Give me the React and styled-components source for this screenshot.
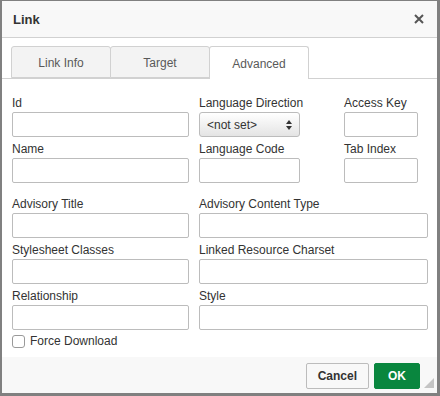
import styled, { createGlobalStyle } from "styled-components";

const GlobalStyle = createGlobalStyle`
  html, body {
    margin: 0;
    padding: 0;
    background: #ffffff;
  }
  body {
    font-family: "Liberation Sans", Arial, sans-serif;
    font-size: 12px;
    color: #333;
  }
`;

const Dialog = styled.div`
  width: 440px;
  height: 396px;
  box-sizing: border-box;
  border-style: solid;
  border-color: #808080;
  border-width: 1px 3px 3px 2px;
  display: flex;
  flex-direction: column;
  background: #fff;
  position: relative;
`;

const TitleBar = styled.div`
  height: 36px;
  flex: none;
  display: flex;
  align-items: center;
  justify-content: space-between;
  padding: 0 12px 0 11px;
  background: #f8f8f8;
  border-bottom: 1px solid #d1d1d1;
`;

const Title = styled.div`
  font-weight: bold;
  font-size: 13px;
  color: #333;
`;

const Close = styled.button`
  width: 12px;
  height: 12px;
  padding: 0;
  border: none;
  background: none;
  display: flex;
  align-items: center;
  justify-content: center;
  cursor: pointer;
`;

const TabBar = styled.div`
  display: flex;
  padding: 8px 0 0 9px;
  border-bottom: 1px solid #d1d1d1;
  flex: none;
`;

const Tab = styled.div`
  width: 100px;
  height: ${(p) => (p.$active ? "33px" : "32px")};
  margin-right: -1px;
  margin-bottom: ${(p) => (p.$active ? "-1px" : "0")};
  box-sizing: border-box;
  border: 1px solid #d1d1d1;
  border-bottom: ${(p) => (p.$active ? "none" : "1px solid #d1d1d1")};
  border-radius: 3px 3px 0 0;
  background: ${(p) => (p.$active ? "#fff" : "#f3f3f3")};
  color: #595959;
  font-size: 12px;
  display: flex;
  align-items: center;
  justify-content: center;
  padding-top: 1px;
`;

const Body = styled.div`
  flex: 1;
  padding: 16px 9px 0 10px;
  display: flex;
  flex-direction: column;
`;

const TopBlock = styled.div`
  display: flex;
  column-gap: 10px;
`;

const Column = styled.div`
  width: ${(p) => p.$width};
  margin-left: ${(p) => p.$offset || "0"};
  display: flex;
  flex-direction: column;
  gap: 4px;
`;

const Rows = styled.div`
  margin-top: 13px;
  display: flex;
  flex-direction: column;
  gap: 4px;
`;

const Row = styled.div`
  display: grid;
  grid-template-columns: 177px 1fr;
  column-gap: 10px;
`;

const Field = styled.div`
  display: flex;
  flex-direction: column;
`;

const Label = styled.label`
  line-height: 17px;
  color: #333;
  white-space: nowrap;
`;

const Input = styled.input`
  height: 25px;
  width: 100%;
  box-sizing: border-box;
  border: 1px solid #bcbcbc;
  border-radius: 2px;
  background: #fff;
  padding: 0 6px;
  font: inherit;
`;

const Select = styled.div`
  height: 25px;
  box-sizing: border-box;
  border: 1px solid #bcbcbc;
  border-radius: 3px;
  background: linear-gradient(#ffffff, #e4e4e4);
  display: flex;
  align-items: center;
  justify-content: space-between;
  padding: 0 7px 0 7px;
  color: #333;
`;

const CheckRow = styled.label`
  display: flex;
  align-items: center;
  gap: 5px;
  margin-top: 4px;
  height: 14px;
  color: #333;
`;

const Box = styled.span`
  width: 11px;
  height: 11px;
  border: 1px solid #9a9a9a;
  border-radius: 3px;
  background: #fff;
`;

const Footer = styled.div`
  height: 36px;
  flex: none;
  background: #f8f8f8;
  display: flex;
  justify-content: flex-end;
  align-items: flex-start;
  gap: 5px;
  padding: 6px 17px 0 0;
  box-sizing: border-box;
`;

const Button = styled.button`
  height: 26px;
  padding: 0 ${(p) => (p.$primary ? "13px" : "11px")};
  box-sizing: border-box;
  border: 1px solid ${(p) => (p.$primary ? "#09863e" : "#bcbcbc")};
  border-radius: 2px;
  background: ${(p) => (p.$primary ? "#09863e" : "#f8f8f8")};
  color: ${(p) => (p.$primary ? "#fff" : "#333")};
  font-family: "Liberation Sans", Arial, sans-serif;
  font-size: 12px;
  font-weight: bold;
  cursor: pointer;
`;

const Grip = styled.svg`
  position: absolute;
  right: 3px;
  bottom: 5px;
`;

function Text({ label }) {
  return (
    <Field>
      <Label>{label}</Label>
      <Input type="text" />
    </Field>
  );
}

export default function App() {
  return (
    <>
      <GlobalStyle />
      <Dialog>
        <TitleBar>
          <Title>Link</Title>
          <Close aria-label="Close">
            <svg width="10" height="10" viewBox="0 0 10 10">
              <path d="M1 1 L9 9 M9 1 L1 9" stroke="#555" strokeWidth="2" />
            </svg>
          </Close>
        </TitleBar>

        <TabBar>
          <Tab>Link Info</Tab>
          <Tab>Target</Tab>
          <Tab $active>Advanced</Tab>
        </TabBar>

        <Body>
          <TopBlock>
            <Column $width="177px">
              <Text label="Id" />
              <Text label="Name" />
            </Column>
            <Column $width="101px">
              <Field>
                <Label>Language Direction</Label>
                <Select>
                  <span>&lt;not set&gt;</span>
                  <svg width="6" height="10" viewBox="0 0 6 10">
                    <path d="M0 4 L3 0 L6 4 Z M0 6 L3 10 L6 6 Z" fill="#333" />
                  </svg>
                </Select>
              </Field>
              <Text label="Language Code" />
            </Column>
            <Column $width="74px" $offset="34px">
              <Text label="Access Key" />
              <Text label="Tab Index" />
            </Column>
          </TopBlock>

          <Rows>
            <Row>
              <Text label="Advisory Title" />
              <Text label="Advisory Content Type" />
            </Row>
            <Row>
              <Text label="Stylesheet Classes" />
              <Text label="Linked Resource Charset" />
            </Row>
            <Row>
              <Text label="Relationship" />
              <Text label="Style" />
            </Row>
          </Rows>

          <CheckRow>
            <Box />
            Force Download
          </CheckRow>
        </Body>

        <Footer>
          <Button>Cancel</Button>
          <Button $primary>OK</Button>
        </Footer>

        <Grip width="10" height="10" viewBox="0 0 10 10">
          <path d="M10 0 L10 10 L0 10 Z" fill="#c4c4c4" />
        </Grip>
      </Dialog>
    </>
  );
}
